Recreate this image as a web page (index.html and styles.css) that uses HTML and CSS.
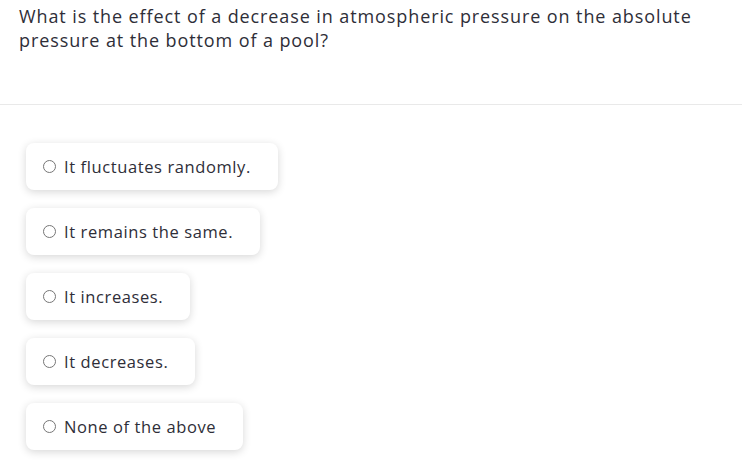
FILE: index.html
```html
<!DOCTYPE html>
<html>
<head>
<meta charset="utf-8">
<link rel="stylesheet" href="styles.css">
</head>
<body>
<div class="page">
  <div class="question">What is the effect of a decrease in atmospheric pressure on the absolute pressure at the bottom of a pool?</div>
  <div class="divider"></div>
  <div class="options">
    <label class="option"><span class="radio"></span><span class="label">It fluctuates randomly.</span></label>
    <label class="option"><span class="radio"></span><span class="label">It remains the same.</span></label>
    <label class="option"><span class="radio"></span><span class="label">It increases.</span></label>
    <label class="option"><span class="radio"></span><span class="label">It decreases.</span></label>
    <label class="option"><span class="radio"></span><span class="label">None of the above</span></label>
  </div>
</div>
</body>
</html>
```

FILE: styles.css
```css
html, body {
  margin: 0;
  padding: 0;
  background: #ffffff;
}
.page {
  font-family: "Open Sans", "Noto Sans", sans-serif;
  color: #2e2e38;
}
.question {
  padding: 4px 20px 0 19px;
  font-size: 18px;
  letter-spacing: 0.9px;
  line-height: 24px;
  height: 104px;
  box-sizing: border-box;
}
.divider {
  height: 1px;
  background: #e9e9e9;
}
.options {
  display: flex;
  flex-direction: column;
  align-items: flex-start;
  gap: 18px;
  padding: 38px 0 17px 26px;
}
.option {
  display: flex;
  align-items: center;
  height: 47px;
  padding: 0 27px 0 17px;
  background: #ffffff;
  border-radius: 8px;
  box-shadow: 0 2px 8px rgba(0, 0, 0, 0.16);
  box-sizing: border-box;
}
.radio {
  width: 11px;
  height: 11px;
  border: 1px solid #767676;
  border-radius: 50%;
  margin-right: 8px;
  flex: none;
}
.label {
  font-size: 16.5px;
  letter-spacing: 0.6px;
}
```
